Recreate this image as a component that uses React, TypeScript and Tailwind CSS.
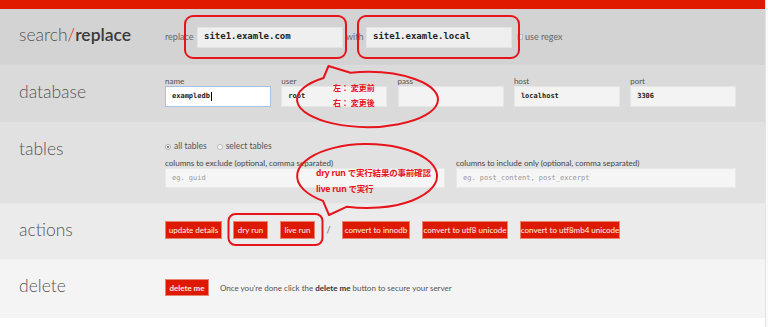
import React from "react";

const mono = "font-['DejaVu_Sans_Mono',monospace]";

function Btn({ w, children, bold }: { w: string; children: React.ReactNode; bold?: boolean }) {
  return (
    <div
      className={`${w} h-[18px] flex items-center justify-center bg-[#dd1a00] border border-[#ea8272] text-[8px] leading-none text-[#fde8e4] whitespace-nowrap ${bold ? "font-bold" : "font-medium"}`}
    >
      {children}
    </div>
  );
}

function Heading({ children }: { children: React.ReactNode }) {
  return (
    <div className="w-[165px] shrink-0 pl-[19px] pt-[17px] text-[17.5px] leading-[18px] font-light text-[#555] whitespace-nowrap">
      {children}
    </div>
  );
}

function DbField({ label, value, focus }: { label: string; value?: string; focus?: boolean }) {
  return (
    <div className="w-[106px] flex flex-col">
      <div className="h-[10px] text-[8px] leading-[10px] text-[#555]">{label}</div>
      <div
        className={`h-[21px] flex items-center pl-[6px] text-[7px] font-bold text-[#222] ${mono} ${
          focus ? "bg-white border border-[#a7c1e4]" : "bg-[#f3f3f3] border border-[#e6e6e6]"
        }`}
      >
        {value}
        {focus && <span className="inline-block w-px h-[9px] bg-black ml-px" />}
      </div>
    </div>
  );
}

export default function App() {
  return (
    <div className="relative w-[768px] h-[327px] overflow-hidden bg-white font-['Lato',sans-serif]">
      <div className="w-[765px]">
        <div className="h-[9px] bg-[#e01a00]" />

        {/* search/replace */}
        <section className="flex h-[57px] bg-[#d3d3d3] border-b border-[#dcdcdc]">
          <Heading>
            search<span className="text-[#e01a00]">/</span>
            <span className="font-semibold text-[#3a3a3a]">replace</span>
          </Heading>
          <div className="flex items-center text-[9px] text-[#666]">
            <span className="w-[32px]">replace</span>
            <div className={`w-[146px] h-[21px] flex items-center pl-[6px] bg-[#efefef] border border-[#e4e4e4] text-[9px] font-bold text-[#222] ${mono}`}>
              site1.examle.com
            </div>
            <span className="w-[23px] pl-[3px]">with</span>
            <div className={`w-[146px] h-[21px] flex items-center pl-[6px] bg-[#efefef] border border-[#e4e4e4] text-[9px] font-bold text-[#222] ${mono}`}>
              site1.examle.local
            </div>
            <span className="ml-[5px] w-[6px] h-[6px] border border-[#bbb] bg-[#e0e0e0]" />
            <span className="ml-[2px]">use regex</span>
          </div>
        </section>

        {/* database */}
        <section className="flex h-[57px] bg-[#dadada] border-b border-[#e2e2e2]">
          <Heading>database</Heading>
          <div className="pt-[10px] flex gap-x-[10.3px]">
            <DbField label="name" value="exampledb" focus />
            <DbField label="user" value="root" />
            <DbField label="pass" />
            <DbField label="host" value="localhost" />
            <DbField label="port" value="3306" />
          </div>
        </section>

        {/* tables */}
        <section className="flex h-[81px] bg-[#e1e1e1] border-b border-[#e8e8e8]">
          <Heading>tables</Heading>
          <div className="pt-[18px] flex flex-col">
            <div className="flex items-center h-[11px] text-[8.5px] text-[#555]">
              <span className="w-[6px] h-[6px] rounded-full border border-[#aaa] bg-white flex items-center justify-center">
                <span className="w-[2px] h-[2px] rounded-full bg-[#555]" />
              </span>
              <span className="ml-[3px]">all tables</span>
              <span className="ml-[10px] w-[6px] h-[6px] rounded-full border border-[#bbb] bg-[#f4f4f4]" />
              <span className="ml-[3px]">select tables</span>
            </div>
            <div className="mt-[6px] flex gap-[11px]">
              <div className="w-[280px]">
                <div className="h-[10px] text-[8px] leading-[10px] text-[#444]">columns to exclude (optional, comma separated)</div>
                <div className={`h-[20px] flex items-center pl-[6px] bg-[#f5f5f5] border border-[#e8e8e8] text-[7px] text-[#999] ${mono}`}>
                  eg. guid
                </div>
              </div>
              <div className="w-[280px]">
                <div className="h-[10px] text-[8px] leading-[10px] text-[#444]">columns to include only (optional, comma separated)</div>
                <div className={`h-[20px] flex items-center pl-[6px] bg-[#f5f5f5] border border-[#e8e8e8] text-[7px] text-[#999] ${mono}`}>
                  eg. post_content, post_excerpt
                </div>
              </div>
            </div>
          </div>
        </section>

        {/* actions */}
        <section className="flex h-[56px] bg-[#ebebeb] border-b border-[#f0f0f0]">
          <Heading>actions</Heading>
          <div className="pt-[17px] flex items-start">
            <Btn w="w-[57px]">update details</Btn>
            <div className="ml-[11px]"><Btn w="w-[35px]">dry run</Btn></div>
            <div className="ml-[12px]"><Btn w="w-[35px]">live run</Btn></div>
            <span className="w-[27px] h-[18px] flex items-center justify-center text-[9px] text-[#666]">/</span>
            <Btn w="w-[68px]">convert to innodb</Btn>
            <div className="ml-[12px]"><Btn w="w-[86px]">convert to utf8 unicode</Btn></div>
            <div className="ml-[12px]"><Btn w="w-[100px]">convert to utf8mb4 unicode</Btn></div>
          </div>
        </section>

        {/* delete */}
        <section className="flex h-[58px] bg-[#f4f4f4]">
          <Heading>delete</Heading>
          <div className="pt-[19px] flex items-start">
            <div className="w-[44px] h-[17px] flex items-center justify-center bg-[#dd1a00] border border-[#ea8272] text-[8px] font-bold text-[#fde8e4]">
              delete me
            </div>
            <span className="ml-[11px] h-[17px] flex items-center text-[8px] text-[#555] whitespace-nowrap">
              Once you’re done click the&nbsp;<b className="text-[#333]">delete me</b>&nbsp;button to secure your server
            </span>
          </div>
        </section>
      </div>
      <div className="absolute top-0 right-0 w-[3px] h-full bg-[#fafafa] border-l border-[#e4e4e4]" />

      {/* annotations */}
      <svg className="absolute inset-0 pointer-events-none" width="768" height="327" viewBox="0 0 768 327">
        <g fill="none" stroke="#e8141c" strokeWidth="2" strokeLinejoin="round">
          <rect x="185" y="16" width="161" height="42" rx="8" />
          <rect x="358" y="16" width="161" height="42" rx="8" />
          <rect x="228.5" y="214" width="94" height="31" rx="7" />
          <path d="M 323 78 L 328 66 L 350 72.8 A 70.5 27.5 0 1 1 323 78 Z" transform="translate(0.5 0)" />
          <path d="M 323 200.9 A 70 32 0 1 1 347 206.7 L 329 215 Z" />
        </g>
      </svg>
      <div className="absolute left-[333px] top-[83px] text-[8px] leading-[10px] font-bold text-[#e8141c] font-['Noto_Sans_CJK_JP',sans-serif] whitespace-nowrap">
        左： 変更前
      </div>
      <div className="absolute left-[333px] top-[98px] text-[8px] leading-[10px] font-bold text-[#e8141c] font-['Noto_Sans_CJK_JP',sans-serif] whitespace-nowrap">
        右： 変更後
      </div>
      <div className="absolute left-[316px] top-[167px] text-[8.5px] leading-[12px] font-bold text-[#e8141c] font-['Noto_Sans','Noto_Sans_CJK_JP',sans-serif] whitespace-nowrap tracking-[-0.2px]">
        dry run で実行結果の事前確認
      </div>
      <div className="absolute left-[316px] top-[183px] text-[8.5px] leading-[12px] font-bold text-[#e8141c] font-['Noto_Sans','Noto_Sans_CJK_JP',sans-serif] whitespace-nowrap tracking-[-0.2px]">
        live run で実行
      </div>
    </div>
  );
}
